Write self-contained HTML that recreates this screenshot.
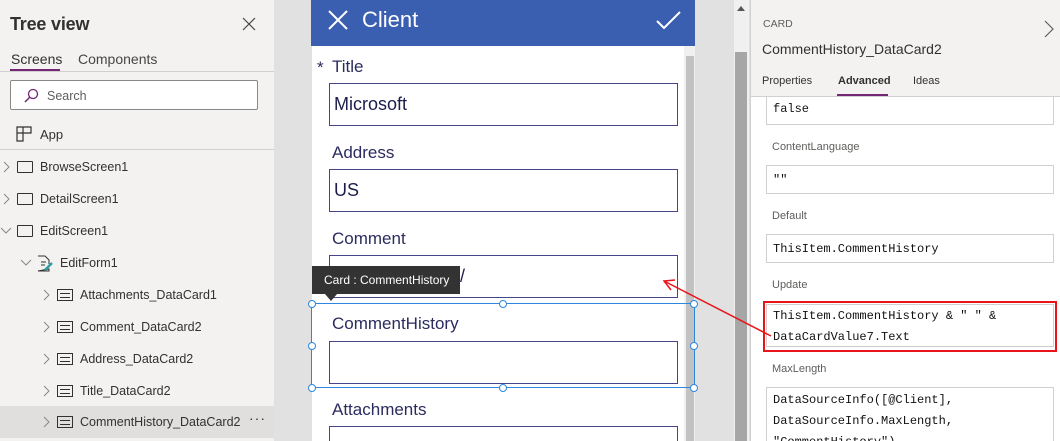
<!DOCTYPE html>
<html style="overflow:hidden"><head><meta charset="utf-8"><style>
*{box-sizing:border-box;margin:0;padding:0}
html,body{width:1060px;height:441px;overflow:hidden}
body{position:relative;background:#e1e1e1;font-family:"Liberation Sans",sans-serif;color:#323130}
.a{position:absolute}
.row{position:absolute;left:0;width:274px;height:32px;font-size:12.5px;line-height:32px}
.ico{position:absolute;top:10px;width:16px;height:12px;border:1.3px solid #323130;border-radius:1px}
.card{position:absolute;top:10px;width:16px;height:12px;border:1.3px solid #323130}
.card:after{content:"";position:absolute;left:2px;right:2px;top:3px;height:3px;border:1px solid #323130;border-left:none;border-right:none}
.lbl{position:absolute;left:332px;font-size:17px;color:#2b2b5f}
.inp{position:absolute;left:329px;width:349px;height:43px;border:1.5px solid #45458a;background:#fff;font-size:18px;color:#1d1d4d;padding:8px 4px;line-height:24px}
.pl{position:absolute;left:772px;font-size:11px;color:#605e5c}
.pb{position:absolute;left:766px;width:288px;border:1px solid #d2d0ce;background:#fff;font-family:"Liberation Mono",monospace;font-size:12px;color:#111;padding:4px 6px;line-height:21px;overflow:hidden}
.h{position:absolute;width:8px;height:8px;border:1.3px solid #2e86de;border-radius:50%;background:#fff}
</style></head><body>
<svg width="0" height="0" style="position:absolute"><defs><symbol id="cr" viewBox="0 0 8 12"><path d="M2 1L7 6L2 11" fill="none" stroke="#8a8886" stroke-width="1"/></symbol></defs></svg>
<div class="a" style="left:0;top:0;width:274px;height:441px;background:#f3f2f1"></div>
<div class="a" style="left:10px;top:14px;font-size:18px;font-weight:bold;color:#323130;letter-spacing:-0.2px">Tree view</div>
<svg class="a" style="left:242px;top:17px" width="14" height="14"><path d="M1 1L13 13M13 1L1 13" stroke="#484644" stroke-width="1.2"/></svg>
<div class="a" style="left:11px;top:51px;font-size:14px">Screens</div>
<div class="a" style="left:78px;top:51px;font-size:14px;color:#484644">Components</div>
<div class="a" style="left:10px;top:69px;width:50px;height:2px;background:#742774"></div>
<div class="a" style="left:0;top:71px;width:274px;height:1px;background:#d2d0ce"></div>
<div class="a" style="left:10px;top:80px;width:248px;height:30px;border:1px solid #8a8886;border-radius:2px;background:#fff"></div>
<svg class="a" style="left:23px;top:88px" width="16" height="16"><circle cx="10" cy="6" r="4.5" fill="none" stroke="#742774" stroke-width="1.3"/><path d="M7 9L2 14" stroke="#742774" stroke-width="1.5"/></svg>
<div class="a" style="left:47px;top:89px;font-size:12.5px;color:#605e5c">Search</div>
<svg class="a" style="left:16px;top:126px" width="16" height="16"><path d="M1 1H15V7H7V15H1ZM7 1V15M1 7H7" fill="none" stroke="#323130" stroke-width="1.2"/></svg>
<div class="a" style="left:40px;top:127px;font-size:13px">App</div>
<div class="a" style="left:0;top:149px;width:274px;height:1px;background:#d2d0ce"></div>
<div class="row" style="top:151px"><svg class="a" style="left:2px;top:10px" width="8" height="12"><use href="#cr"/></svg><div class="ico" style="left:17px"></div><span class="a" style="left:40px">BrowseScreen1</span></div>
<div class="row" style="top:183px"><svg class="a" style="left:2px;top:10px" width="8" height="12"><use href="#cr"/></svg><div class="ico" style="left:17px"></div><span class="a" style="left:40px">DetailScreen1</span></div>
<div class="row" style="top:215px"><svg class="a" style="left:0;top:12px" width="12" height="8"><path d="M1 1L6 6L11 1" fill="none" stroke="#8a8886"/></svg><div class="ico" style="left:17px"></div><span class="a" style="left:40px">EditScreen1</span></div>
<div class="row" style="top:247px"><svg class="a" style="left:20px;top:12px" width="12" height="8"><path d="M1 1L6 6L11 1" fill="none" stroke="#8a8886"/></svg>
<svg class="a" style="left:37px;top:8px" width="16" height="17"><path d="M1 1H8L12 5V9M12 14V16H1Z" fill="none" stroke="#323130"/><path d="M4 7H9M4 10H8" stroke="#323130"/><path d="M8 15L15 8" stroke="#2aa0a4" stroke-width="2.5"/></svg>
<span class="a" style="left:60px">EditForm1</span></div>
<div class="row" style="top:279px"><svg class="a" style="left:42px;top:10px" width="8" height="12"><use href="#cr"/></svg><div class="card" style="left:57px"></div><span class="a" style="left:80px">Attachments_DataCard1</span></div>
<div class="row" style="top:311px"><svg class="a" style="left:42px;top:10px" width="8" height="12"><use href="#cr"/></svg><div class="card" style="left:57px"></div><span class="a" style="left:80px">Comment_DataCard2</span></div>
<div class="row" style="top:343px"><svg class="a" style="left:42px;top:10px" width="8" height="12"><use href="#cr"/></svg><div class="card" style="left:57px"></div><span class="a" style="left:80px">Address_DataCard2</span></div>
<div class="row" style="top:375px"><svg class="a" style="left:42px;top:10px" width="8" height="12"><use href="#cr"/></svg><div class="card" style="left:57px"></div><span class="a" style="left:80px">Title_DataCard2</span></div>
<div class="row" style="top:406px;background:#e1dfdd"><svg class="a" style="left:42px;top:10px" width="8" height="12"><use href="#cr"/></svg><div class="card" style="left:57px"></div><span class="a" style="left:80px">CommentHistory_DataCard2</span><span class="a" style="left:249px;top:-4px;font-size:14px;letter-spacing:1px">···</span></div>
<div class="a" style="left:311px;top:0;width:384px;height:46px;background:#3a5fb0"></div>
<svg class="a" style="left:328px;top:10px" width="20" height="20"><path d="M1 1L19 19M19 1L1 19" stroke="#fff" stroke-width="2"/></svg>
<div class="a" style="left:362px;top:7px;font-size:22px;color:#fff">Client</div>
<svg class="a" style="left:656px;top:10px" width="25" height="20"><path d="M1 11L8 18L24 2" fill="none" stroke="#fff" stroke-width="2"/></svg>
<div class="a" style="left:312px;top:46px;width:372px;height:395px;background:#fff"></div>
<div class="a" style="left:684px;top:46px;width:11px;height:395px;background:#f0f0f0"></div>
<div class="a" style="left:686px;top:56px;width:8px;height:385px;background:#c2c2c2"></div>
<div class="a" style="left:734px;top:0;width:15px;height:441px;background:#f0f0f0"></div>
<div class="a" style="left:735px;top:52px;width:12px;height:389px;background:#a6a6a6"></div>
<div class="a" style="left:737px;top:6px;width:0;height:0;border:4px solid transparent;border-bottom:5px solid #555;border-top:none"></div>
<div class="a" style="left:317px;top:58px;font-size:17px;color:#2b2b5f">*</div>
<div class="lbl" style="top:57px">Title</div>
<div class="inp" style="top:83px">Microsoft</div>
<div class="lbl" style="top:143px">Address</div>
<div class="inp" style="top:169px">US</div>
<div class="lbl" style="top:229px">Comment</div>
<div class="inp" style="top:255px"><span style="position:absolute;left:130px;top:8px">/</span></div>
<div class="lbl" style="top:314px">CommentHistory</div>
<div class="inp" style="top:341px"></div>
<div class="lbl" style="top:400px">Attachments</div>
<div class="inp" style="top:426px;height:30px"></div>
<div class="a" style="left:312px;top:266px;width:148px;height:28px;background:#333;color:#fff;font-size:12px;line-height:28px;padding-left:12px">Card : CommentHistory</div>
<div class="a" style="left:325px;top:294px;border:6px solid transparent;border-top:7px solid #333;border-bottom:none"></div>
<div class="a" style="left:311px;top:303px;width:384px;height:85px;border:1px solid #2e86de"></div>
<div class="h" style="left:308px;top:300px"></div><div class="h" style="left:499px;top:300px"></div><div class="h" style="left:690px;top:300px"></div>
<div class="h" style="left:308px;top:342px"></div><div class="h" style="left:690px;top:342px"></div>
<div class="h" style="left:308px;top:384px"></div><div class="h" style="left:499px;top:384px"></div><div class="h" style="left:690px;top:384px"></div>
<div class="a" style="left:750px;top:0;width:310px;height:441px;background:#fff;border-left:1px solid #d2d0ce"></div>
<div class="a" style="left:751px;top:0;width:309px;height:97px;background:#f3f2f1;border-bottom:1px solid #d2d0ce"></div>
<div class="a" style="left:763px;top:18px;font-size:10.5px;color:#605e5c">CARD</div>
<div class="a" style="left:762px;top:41px;font-size:14px;color:#323130">CommentHistory_DataCard2</div>
<svg class="a" style="left:1044px;top:20px" width="10" height="18"><path d="M1 1L9 9L1 17" fill="none" stroke="#605e5c" stroke-width="1.2"/></svg>
<div class="a" style="left:762px;top:75px;font-size:11px;color:#323130">Properties</div>
<div class="a" style="left:838px;top:75px;font-size:11px;font-weight:bold;color:#323130">Advanced</div>
<div class="a" style="left:913px;top:75px;font-size:11px;color:#323130">Ideas</div>
<div class="a" style="left:837px;top:94px;width:51px;height:2px;background:#742774"></div>
<div class="pb" style="top:97px;height:28px;border-top:none;padding-top:2px">false</div>
<div class="pl" style="top:141px">ContentLanguage</div>
<div class="pb" style="top:165px;height:29px">""</div>
<div class="pl" style="top:210px">Default</div>
<div class="pb" style="top:234px;height:29px">ThisItem.CommentHistory</div>
<div class="pl" style="top:279px">Update</div>
<div class="pb" style="top:304px;height:43px;padding-top:1px">ThisItem.CommentHistory &amp; " " &amp;<br>DataCardValue7.Text</div>
<div class="a" style="left:763px;top:301px;width:294px;height:51px;border:2px solid #e8141b"></div>
<div class="pl" style="top:363px">MaxLength</div>
<div class="pb" style="top:387px;height:60px;padding-top:2px">DataSourceInfo([@Client],<br>DataSourceInfo.MaxLength,<br>"CommentHistory")</div>
<svg class="a" style="left:0;top:0" width="1060" height="441"><path d="M771 336L664 281" stroke="#e8141b" stroke-width="1.5"/><path d="M675 280L664 281L671 290" fill="none" stroke="#e8141b" stroke-width="1.5"/></svg>
</body></html>
